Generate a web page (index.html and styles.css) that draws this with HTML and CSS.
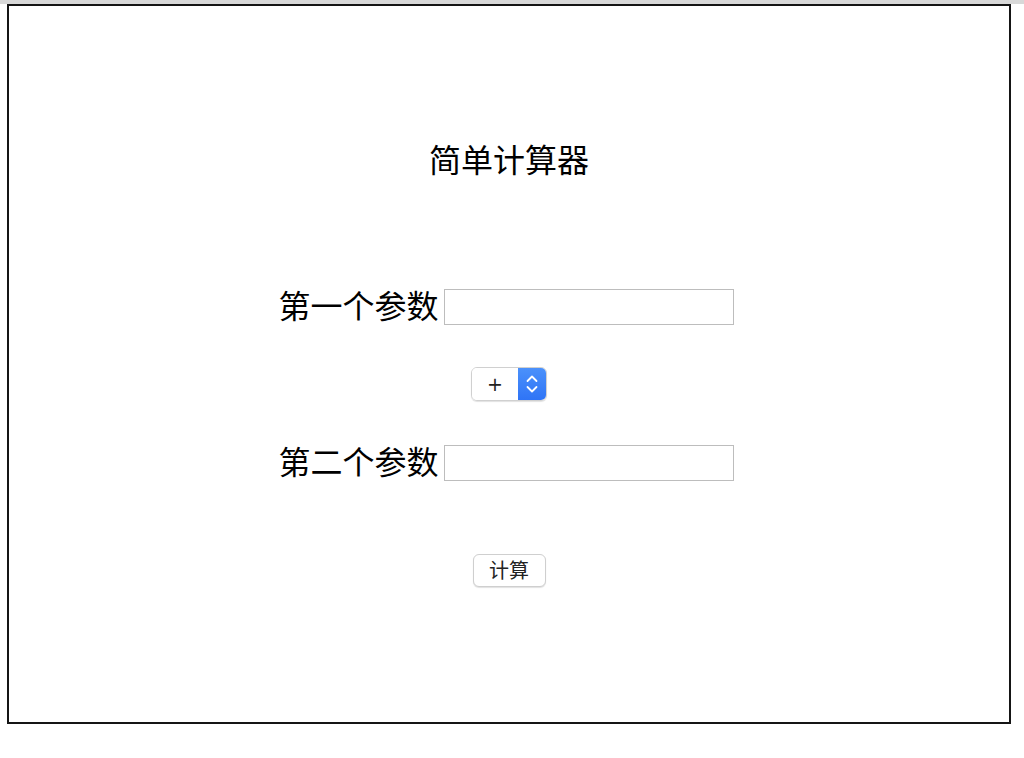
FILE: index.html
```html
<!DOCTYPE html>
<html lang="zh-CN">
<head>
<meta charset="utf-8">
<title>简单计算器</title>
<link rel="stylesheet" href="styles.css">
</head>
<body>
<div class="topbar"></div>
<div class="frame">
  <h1 class="title">简单计算器</h1>
  <div class="row row-first">
    <label class="label" for="a">第一个参数</label>
    <input class="field" id="a" type="text">
  </div>
  <div class="op">
    <select class="op-select">
      <option>+</option>
      <option>-</option>
      <option>*</option>
      <option>/</option>
    </select>
    <span class="op-arrows">
      <svg width="14" height="22" viewBox="0 0 14 22" aria-hidden="true">
        <path d="M2.5 8 L7 3.5 L11.5 8" fill="none" stroke="#fff" stroke-width="1.8" stroke-linecap="round" stroke-linejoin="round"/>
        <path d="M2.5 14 L7 18.5 L11.5 14" fill="none" stroke="#fff" stroke-width="1.8" stroke-linecap="round" stroke-linejoin="round"/>
      </svg>
    </span>
  </div>
  <div class="row row-second">
    <label class="label" for="b">第二个参数</label>
    <input class="field" id="b" type="text">
  </div>
  <button class="calc" type="button">计算</button>
</div>
</body>
</html>
```

FILE: styles.css
```css
html, body {
  margin: 0;
  padding: 0;
  background: #fff;
}
body {
  font-family: "Noto Sans CJK SC", "Noto Sans", sans-serif;
  color: #000;
}
.topbar {
  height: 4px;
  background: #d8d8d8;
}
.frame {
  box-sizing: border-box;
  width: 1004px;
  height: 720px;
  margin-left: 7px;
  border: 2px solid #151515;
  display: flex;
  flex-direction: column;
  align-items: center;
}
.title {
  margin: 132px 0 0;
  font-size: 32px;
  line-height: 40px;
  font-weight: 400;
}
.row {
  display: flex;
  align-items: center;
  gap: 5px;
  height: 36px;
  margin-right: 6px;
}
.row-first {
  margin-top: 111px;
}
.row-second {
  margin-top: 44px;
}
.label {
  font-size: 32px;
  line-height: 36px;
  padding-bottom: 6px;
}
.field {
  box-sizing: border-box;
  width: 290px;
  height: 36px;
  margin: 0;
  border: 1px solid #bdbdbd;
  padding: 0 4px;
  font-size: 16px;
  outline: none;
}
.op {
  margin-top: 42px;
  display: flex;
  width: 76px;
  height: 34px;
  box-sizing: border-box;
  border: 1px solid #d0d0d0;
  border-radius: 6px;
  overflow: hidden;
  box-shadow: 0 1px 1px rgba(0,0,0,0.12);
}
.op-select {
  appearance: none;
  -webkit-appearance: none;
  border: none;
  background: #fff;
  margin: 0;
  padding: 0 0 0 15px;
  width: 46px;
  height: 100%;
  font-family: "DejaVu Sans", sans-serif;
  font-size: 19px;
  color: #222;
  outline: none;
}
.op-arrows {
  flex: 1;
  display: flex;
  align-items: center;
  justify-content: center;
  background: linear-gradient(#4b91fb, #2f74f6);
}
.calc {
  margin-top: 73px;
  width: 73px;
  height: 33px;
  box-sizing: border-box;
  border: 1px solid #cfcfcf;
  border-radius: 6px;
  background: #fff;
  box-shadow: 0 1px 1px rgba(0,0,0,0.12);
  font-family: "Noto Sans CJK SC", sans-serif;
  font-size: 20px;
  line-height: 1;
  color: #222;
  padding: 0 0 2px;
}
```
